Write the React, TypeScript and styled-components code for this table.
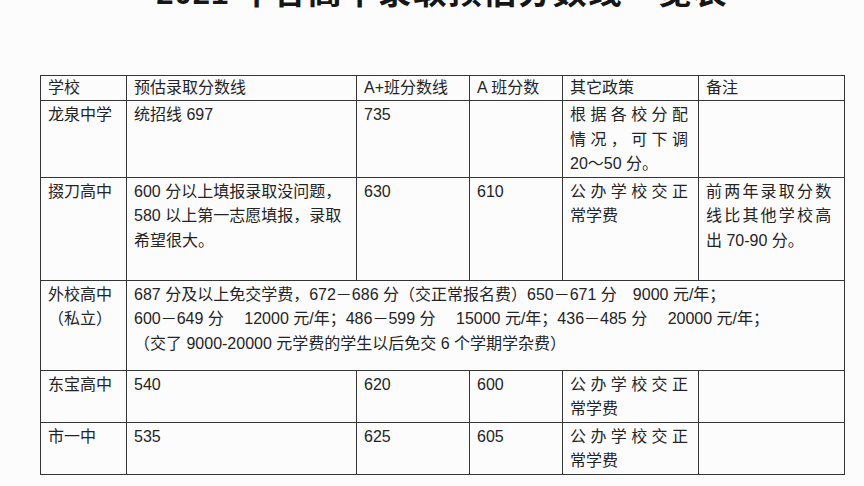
import React from 'react';
import styled, { createGlobalStyle } from 'styled-components';

const GlobalStyle = createGlobalStyle`
  html, body {
    margin: 0;
    padding: 0;
    background: #fcfcfc;
  }
  body {
    font-family: "Liberation Sans", "Noto Sans CJK SC", sans-serif;
    color: #242424;
  }
`;

const Page = styled.div`
  width: 864px;
  height: 486px;
  overflow: hidden;
  padding: 0 20px 0 40px;
  box-sizing: border-box;
`;

const Title = styled.h1`
  margin: -27px 0 0;
  height: 34px;
  line-height: 34px;
  font-size: 34px;
  font-weight: 600;
  text-align: center;
  white-space: nowrap;
  letter-spacing: 1px;
  color: #161616;
  font-family: "Noto Sans CJK SC", sans-serif;
`;

const Year = styled.span`
  font-family: "Liberation Sans", sans-serif;
  font-weight: 700;
  font-size: 31px;
`;

const Table = styled.table`
  margin-top: 68px;
  width: 804px;
  border-collapse: collapse;
  table-layout: fixed;
`;

const Col = styled.col<{ $w: number }>`
  width: ${p => p.$w}px;
`;

const Row = styled.tr<{ $h: number }>`
  height: ${p => p.$h}px;
`;

const Cell = styled.td`
  border: 1.5px solid #353535;
  padding: 2px 5px 0 7px;
  vertical-align: top;
  font-size: 16px;
  line-height: 24.5px;
  white-space: nowrap;
  overflow: hidden;
`;

const HeadCell = styled(Cell)`
  padding-top: 0;
  line-height: 23px;
`;

const Line = styled.div<{ $spread?: number }>`
  letter-spacing: ${p => p.$spread ?? 0}px;
`;

const COLS = [86, 230, 113, 93, 136, 146];

const PUBLIC_FEE = (
  <>
    <Line $spread={4.4}>公办学校交正</Line>
    <Line>常学费</Line>
  </>
);

export default function App() {
  return (
    <Page>
      <GlobalStyle />
      <Title>
        <Year>2021</Year> 年各高中录取预估分数线一览表
      </Title>
      <Table>
        <colgroup>
          {COLS.map((w, i) => (
            <Col key={i} $w={w} />
          ))}
        </colgroup>
        <tbody>
          <Row $h={25}>
            <HeadCell>学校</HeadCell>
            <HeadCell>预估录取分数线</HeadCell>
            <HeadCell>A+班分数线</HeadCell>
            <HeadCell>A 班分数</HeadCell>
            <HeadCell>其它政策</HeadCell>
            <HeadCell>备注</HeadCell>
          </Row>
          <Row $h={76}>
            <Cell>龙泉中学</Cell>
            <Cell>统招线 697</Cell>
            <Cell>735</Cell>
            <Cell />
            <Cell>
              <Line $spread={4.4}>根据各校分配</Line>
              <Line $spread={4.4}>情况，可下调</Line>
              <Line>20～50 分。</Line>
            </Cell>
            <Cell />
          </Row>
          <Row $h={103}>
            <Cell>掇刀高中</Cell>
            <Cell>
              <Line>600 分以上填报录取没问题，</Line>
              <Line>580 以上第一志愿填报，录取</Line>
              <Line>希望很大。</Line>
            </Cell>
            <Cell>630</Cell>
            <Cell>610</Cell>
            <Cell>{PUBLIC_FEE}</Cell>
            <Cell>
              <Line $spread={2.2}>前两年录取分数</Line>
              <Line $spread={2.2}>线比其他学校高</Line>
              <Line>出 70-90 分。</Line>
            </Cell>
          </Row>
          <Row $h={90}>
            <Cell>
              <Line>外校高中</Line>
              <Line>（私立）</Line>
            </Cell>
            <Cell colSpan={5}>
              <Line>687 分及以上免交学费，672－686 分（交正常报名费）650－671 分{'\u3000'}9000 元/年；</Line>
              <Line>
                600－649 分{'\u00a0\u3000'}12000 元/年；486－599 分{'\u00a0\u3000'}15000 元/年；436－485 分{'\u00a0\u3000'}20000 元/年；
              </Line>
              <Line>（交了 9000-20000 元学费的学生以后免交 6 个学期学杂费）</Line>
            </Cell>
          </Row>
          <Row $h={52}>
            <Cell>东宝高中</Cell>
            <Cell>540</Cell>
            <Cell>620</Cell>
            <Cell>600</Cell>
            <Cell>{PUBLIC_FEE}</Cell>
            <Cell />
          </Row>
          <Row $h={52}>
            <Cell>市一中</Cell>
            <Cell>535</Cell>
            <Cell>625</Cell>
            <Cell>605</Cell>
            <Cell>{PUBLIC_FEE}</Cell>
            <Cell />
          </Row>
        </tbody>
      </Table>
    </Page>
  );
}
